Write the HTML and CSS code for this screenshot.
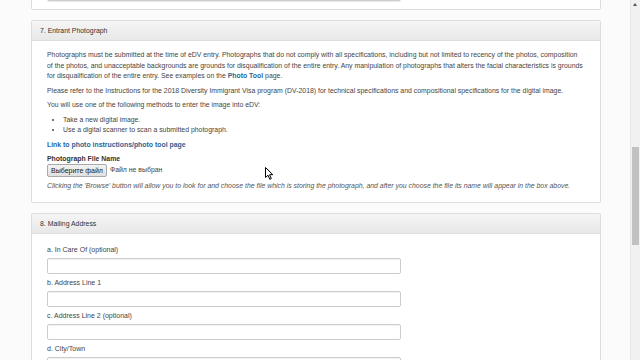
FILE: index.html
```html
<!DOCTYPE html>
<html lang="en">
<head>
    <meta charset="UTF-8">
    <title>eDV Entry</title>
    <link rel="stylesheet" href="styles.css">
</head>
<body>
<div class="page">
    <div class="panel panel--cut">
        <div class="panel__body">
            <div class="form__input form__input--cut"></div>
        </div>
    </div>

    <div class="panel">
        <div class="panel__heading">7. Entrant Photograph</div>
        <div class="panel__body panel__body--text">
            <p>Photographs must be submitted at the time of eDV entry. Photographs that do not comply with all specifications, including but not limited to recency of the photos, composition of the photos, and unacceptable backgrounds are grounds for disqualification of the entire entry. Any manipulation of photographs that alters the facial characteristics is grounds for disqualification of the entire entry. See examples on the <a href="#" class="link">Photo Tool</a> page.</p>
            <p>Please refer to the Instructions for the 2018 Diversity Immigrant Visa program (DV-2018) for technical specifications and compositional specifications for the digital image.</p>
            <p>You will use one of the following methods to enter the image into eDV:</p>
            <ul class="list">
                <li>Take a new digital image.</li>
                <li>Use a digital scanner to scan a submitted photograph.</li>
            </ul>
            <p><a href="#" class="link">Link to photo instructions/photo tool page</a></p>
            <div class="upload">
                <div class="upload__label">Photograph File Name</div>
                <div class="upload__row">
                    <button class="upload__button">Выберите файл</button>
                    <span class="upload__status">Файл не выбран</span>
                    <svg class="cursor" width="9" height="13" viewBox="0 0 9 13">
                        <path d="M0.5 0.5 L0.5 10.5 L3 8.2 L4.8 12.3 L6.3 11.6 L4.6 7.7 L7.8 7.7 Z" fill="#fff" stroke="#000" stroke-width="1" stroke-linejoin="round"/>
                    </svg>
                </div>
            </div>
            <p class="hint">Clicking the 'Browse' button will allow you to look for and choose the file which is storing the photograph, and after you choose the file its name will appear in the box above.</p>
        </div>
    </div>

    <div class="panel">
        <div class="panel__heading">8. Mailing Address</div>
        <div class="panel__body panel__body--form">
            <div class="form__group">
                <label class="form__label">a. In Care Of (optional)</label>
                <div class="form__input"></div>
            </div>
            <div class="form__group">
                <label class="form__label">b. Address Line 1</label>
                <div class="form__input"></div>
            </div>
            <div class="form__group">
                <label class="form__label">c. Address Line 2 (optional)</label>
                <div class="form__input"></div>
            </div>
            <div class="form__group">
                <label class="form__label">d. City/Town</label>
                <div class="form__input"></div>
            </div>
        </div>
    </div>
</div>

<div class="scrollbar">
    <span class="scrollbar__arrow"></span>
    <div class="scrollbar__thumb"></div>
</div>
</body>
</html>
```

FILE: styles.css
```css
body, html {
    margin: 0;
    height: 100%;
    overflow: hidden;
    background-color: #fbfbfb;
    font-family: "Liberation Sans", Arial, sans-serif;
    font-size: 6.9px;
    line-height: 10.5px;
    color: #444;
}

.page {
    width: 570px;
    margin-left: 31px;
    margin-top: -21px;
}

.panel {
    background-color: #fff;
    border: 1px solid #ddd;
    border-radius: 2px;
    margin-bottom: 10px;
}

.panel__heading {
    padding: 4px 8px;
    line-height: 11px;
    font-size: 6.9px;
    color: #333;
    background-image: linear-gradient(to bottom, #f5f5f5, #e8e8e8);
    border-bottom: 1px solid #ddd;
}

.panel__body {
    padding: 7px 15px 8px;
}

.panel__body--text {
    padding-top: 9px;
    padding-bottom: 7px;
}

.panel__body--form {
    padding-top: 11px;
}

.panel--cut .panel__body {
    padding-top: 0;
}

p {
    margin: 0 0 4px;
}

.link {
    color: #2a6496;
    font-weight: bold;
    text-decoration: none;
}

.list {
    margin: 3.5px 0 4px;
    padding-left: 16px;
}

.upload__label {
    font-weight: bold;
    color: #333;
}

.upload__row {
    display: flex;
    align-items: center;
    gap: 3px;
    height: 12px;
    margin-bottom: 4px;
}

.upload__button {
    font-family: "Liberation Sans", Arial, sans-serif;
    font-size: 7px;
    line-height: 9px;
    padding: 1px 3px;
    color: #222;
    background-image: linear-gradient(to bottom, #f2f2f2, #e0e0e0);
    border: 1px solid #a9a9a9;
    border-radius: 2px;
}

.upload__status {
    color: #444;
}

.cursor {
    margin-left: 100px;
    margin-top: 6px;
}

.hint {
    font-style: italic;
    color: #555;
}

.form__group {
    margin-bottom: 4.5px;
}

.form__label {
    display: block;
    margin-bottom: 2px;
    color: #444;
    font-size: 7px;
}

.form__input {
    box-sizing: border-box;
    width: 354px;
    height: 16px;
    border: 1px solid #ccc;
    border-radius: 2px;
    background-color: #fff;
    box-shadow: inset 0 1px 1px rgba(0, 0, 0, 0.06);
}

.form__input--cut {
    height: 21px;
    box-shadow: 0 1px 1px rgba(0, 0, 0, 0.08);
}

.scrollbar {
    position: fixed;
    top: 0;
    right: 0;
    width: 9px;
    height: 100%;
    background-color: #f1f1f1;
    border-left: 1px solid #e8e8e8;
}

.scrollbar__arrow {
    position: absolute;
    top: 3px;
    left: 2px;
    border-left: 2.5px solid transparent;
    border-right: 2.5px solid transparent;
    border-bottom: 3px solid #555;
}

.scrollbar__thumb {
    position: absolute;
    top: 147px;
    left: 1px;
    width: 7px;
    height: 98px;
    background-color: #c1c1c1;
}
```
